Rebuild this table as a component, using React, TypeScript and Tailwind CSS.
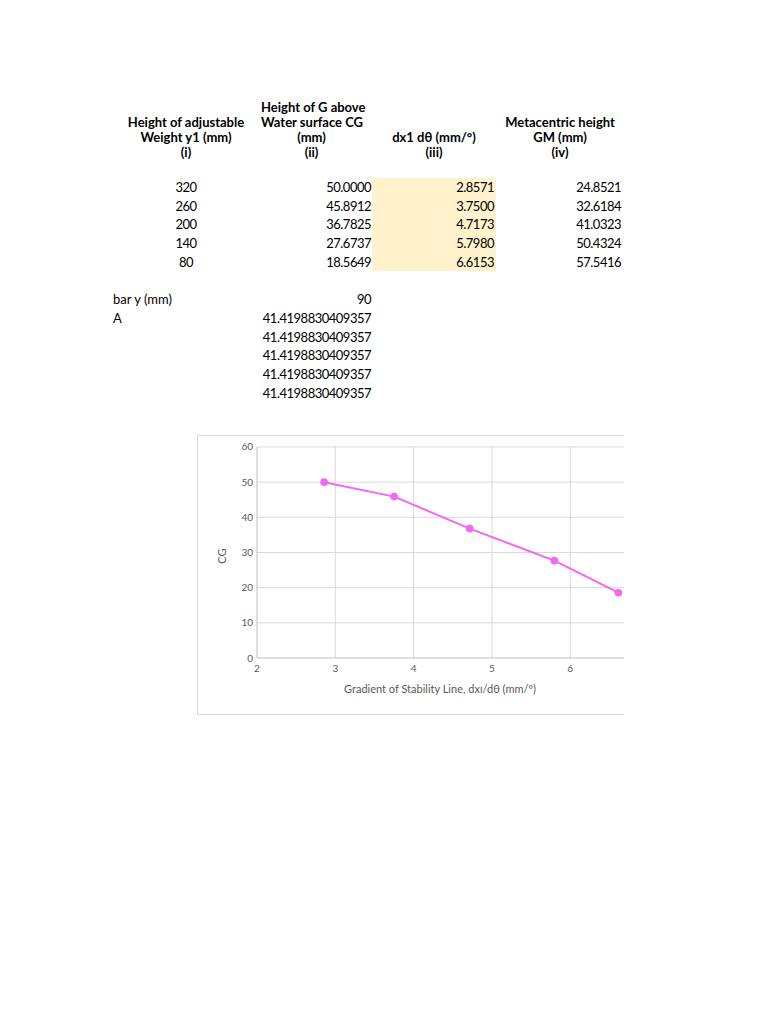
const rows = [
  ['320', '50.0000', '2.8571', '24.8521'],
  ['260', '45.8912', '3.7500', '32.6184'],
  ['200', '36.7825', '4.7173', '41.0323'],
  ['140', '27.6737', '5.7980', '50.4324'],
  ['80', '18.5649', '6.6153', '57.5416'],
];

const points = rows.map(r => [parseFloat(r[2]), parseFloat(r[1])]);

const Chart = () => {
  const x0 = 60;
  const y0 = 223;
  const sx = 78.3;
  const sy = 3.517;
  const px = (v: number) => x0 + (v - 2) * sx;
  const py = (v: number) => y0 - v * sy;
  const path = points.map(([x, y], i) => `${i === 0 ? 'M' : 'L'}${px(x)},${py(y)}`).join(' ');

  return (
    <svg width="427" height="280" className="block" style={{ fontFamily: 'Lato, sans-serif' }}>
      {/* frame */}
      <line x1="0.5" y1="0" x2="0.5" y2="280" stroke="#d9d9d9" />
      <line x1="0" y1="0.5" x2="427" y2="0.5" stroke="#d9d9d9" />
      <line x1="0" y1="279.5" x2="427" y2="279.5" stroke="#d9d9d9" />

      {/* grid */}
      {[10, 20, 30, 40, 50, 60].map(v => (
        <line key={v} x1={x0} y1={py(v)} x2="427" y2={py(v)} stroke="#d9d9d9" />
      ))}
      {[3, 4, 5, 6].map(v => (
        <line key={v} x1={px(v)} y1={py(60)} x2={px(v)} y2={y0} stroke="#d9d9d9" />
      ))}
      <line x1={x0} y1={py(60)} x2={x0} y2={y0} stroke="#bfbfbf" />
      <line x1={x0} y1={y0} x2="427" y2={y0} stroke="#bfbfbf" />

      {/* tick labels */}
      {[0, 10, 20, 30, 40, 50, 60].map(v => (
        <text key={v} x={x0 - 4} y={py(v) + 3.5} textAnchor="end" fontSize="10" fill="#595959">
          {v}
        </text>
      ))}
      {[2, 3, 4, 5, 6].map(v => (
        <text key={v} x={px(v)} y={y0 + 14} textAnchor="middle" fontSize="10" fill="#595959">
          {v}
        </text>
      ))}

      {/* titles */}
      <text x="243" y="258" textAnchor="middle" fontSize="11" fill="#595959">
        Gradient of Stability Line, dxı/dθ (mm/º)
      </text>
      <text x="29" y="121" textAnchor="middle" fontSize="11" fill="#595959" transform="rotate(-90 29 121)">
        CG
      </text>

      {/* series */}
      <path d={path} fill="none" stroke="#f566f5" strokeWidth="2" />
      {points.map(([x, y]) => (
        <circle key={x} cx={px(x)} cy={py(y)} r="3.8" fill="#f566f5" />
      ))}
    </svg>
  );
};

export default function App() {
  return (
    <div
      className="w-[768px] h-[1024px] bg-white pt-[100px] pl-[111px] text-[13px] text-black"
      style={{ fontFamily: 'Lato, "Liberation Sans", sans-serif' }}
    >
      {/* header */}
      <div className="grid grid-cols-[150px_111px_124px_128px] items-end font-bold leading-[15px] text-center h-[60px]">
        <div>Height of adjustable<br />Weight y1 (mm)<br />(i)</div>
        <div className="pr-[10px] whitespace-nowrap">Height of G above<br />Water surface CG<br />(mm)<br />(ii)</div>
        <div>dx1 dθ (mm/°)<br />(iii)</div>
        <div>Metacentric height<br />GM (mm)<br />(iv)</div>
      </div>

      {/* data */}
      <div className="mt-[18px] tracking-[-0.5px]">
        {rows.map(r => (
          <div key={r[0]} className="grid grid-cols-[150px_111px_124px_128px] h-[18.7px] leading-[18.7px]">
            <div className="text-center">{r[0]}</div>
            <div className="text-right pr-[1px]">{r[1]}</div>
            <div className="text-right pr-[2px] bg-[#fff2cc]">{r[2]}</div>
            <div className="text-right pr-[3px]">{r[3]}</div>
          </div>
        ))}
      </div>

      {/* bar y / A */}
      <div className="mt-[18.7px] leading-[18.7px]">
        <div className="grid grid-cols-[150px_111px] h-[18.7px]">
          <div className="pl-[2px]">bar y (mm)</div>
          <div className="text-right pr-[1px] tracking-[-0.5px]">90</div>
        </div>
        {[0, 1, 2, 3, 4].map(i => (
          <div key={i} className="grid grid-cols-[150px_111px] h-[18.7px]">
            <div className="pl-[2px]">{i === 0 ? 'A' : ''}</div>
            <div className="text-right pr-[1px] whitespace-nowrap tracking-[-0.5px]">41.4198830409357</div>
          </div>
        ))}
      </div>

      {/* chart */}
      <div className="mt-[33px] ml-[86px]">
        <Chart />
      </div>
    </div>
  );
}
